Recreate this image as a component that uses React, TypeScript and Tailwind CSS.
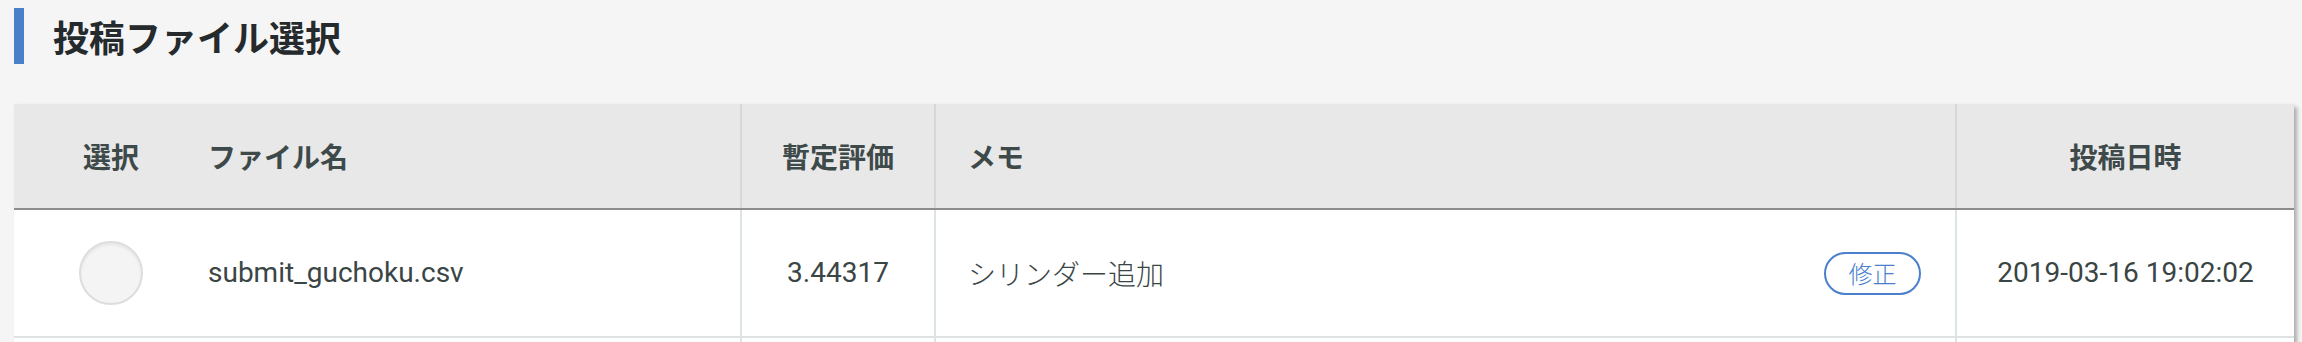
import React from "react";

const jp = { fontFamily: "'Noto Sans CJK JP', 'Noto Sans', sans-serif" };
const ro = { fontFamily: "Roboto, 'Noto Sans CJK JP', sans-serif" };

function Row({ show }: { show: boolean }) {
  return (
    <div className="grid grid-cols-[194px_532px_194px_1021px_339px] h-[128px] border-b-2 border-[#dce3e3] bg-white text-[28px] text-[#3a4545]" style={ro}>
      <div className="flex items-center justify-center">
        {show && (
          <div className="w-[64px] h-[64px] rounded-full bg-[#f4f4f4] border-2 border-[#dddddd] shadow-[inset_0_2px_3px_rgba(0,0,0,0.06)]" />
        )}
      </div>
      <div className="flex items-center">{show && "submit_guchoku.csv"}</div>
      <div className="flex items-center justify-center border-l-2 border-[#dde4e4]">{show && "3.44317"}</div>
      <div className="flex items-center justify-between border-l-2 border-[#dde4e4] pl-[32px] pr-[34px]">
        {show && (
          <>
            <span className="font-light" style={jp}>シリンダー追加</span>
            <button className="w-[97px] h-[43px] rounded-full border-2 border-[#4a80cc] text-[#4a80cc] text-[24px] font-light leading-none flex items-center justify-center" style={jp}>
              修正
            </button>
          </>
        )}
      </div>
      <div className="flex items-center justify-center border-l-2 border-[#dde4e4]">{show && "2019-03-16 19:02:02"}</div>
    </div>
  );
}

export default function App() {
  return (
    <div className="w-[2302px] h-[342px] overflow-hidden bg-[#f5f5f5]">
      <div className="pt-[8px] pl-[14px] flex items-center">
        <div className="w-[10px] h-[56px] bg-[#4a80c8]" />
        <h1 className="ml-[29px] text-[36px] font-bold text-[#252a2c] leading-none" style={jp}>
          投稿ファイル選択
        </h1>
      </div>
      <div className="mt-[40px] ml-[14px] w-[2280px] bg-white shadow-[3px_3px_4px_rgba(0,0,0,0.3)]">
        <div className="grid grid-cols-[194px_532px_194px_1021px_339px] h-[106px] bg-[#e8e8e8] border-b-2 border-[#8c8c8c] text-[28px] font-bold text-[#3e4949]" style={jp}>
          <div className="flex items-center justify-center">選択</div>
          <div className="flex items-center">ファイル名</div>
          <div className="flex items-center justify-center border-l-2 border-[#d3d8d8]">暫定評価</div>
          <div className="flex items-center border-l-2 border-[#d3d8d8] pl-[32px]">メモ</div>
          <div className="flex items-center justify-center border-l-2 border-[#d3d8d8]">投稿日時</div>
        </div>
        <Row show={true} />
        <Row show={false} />
      </div>
    </div>
  );
}
